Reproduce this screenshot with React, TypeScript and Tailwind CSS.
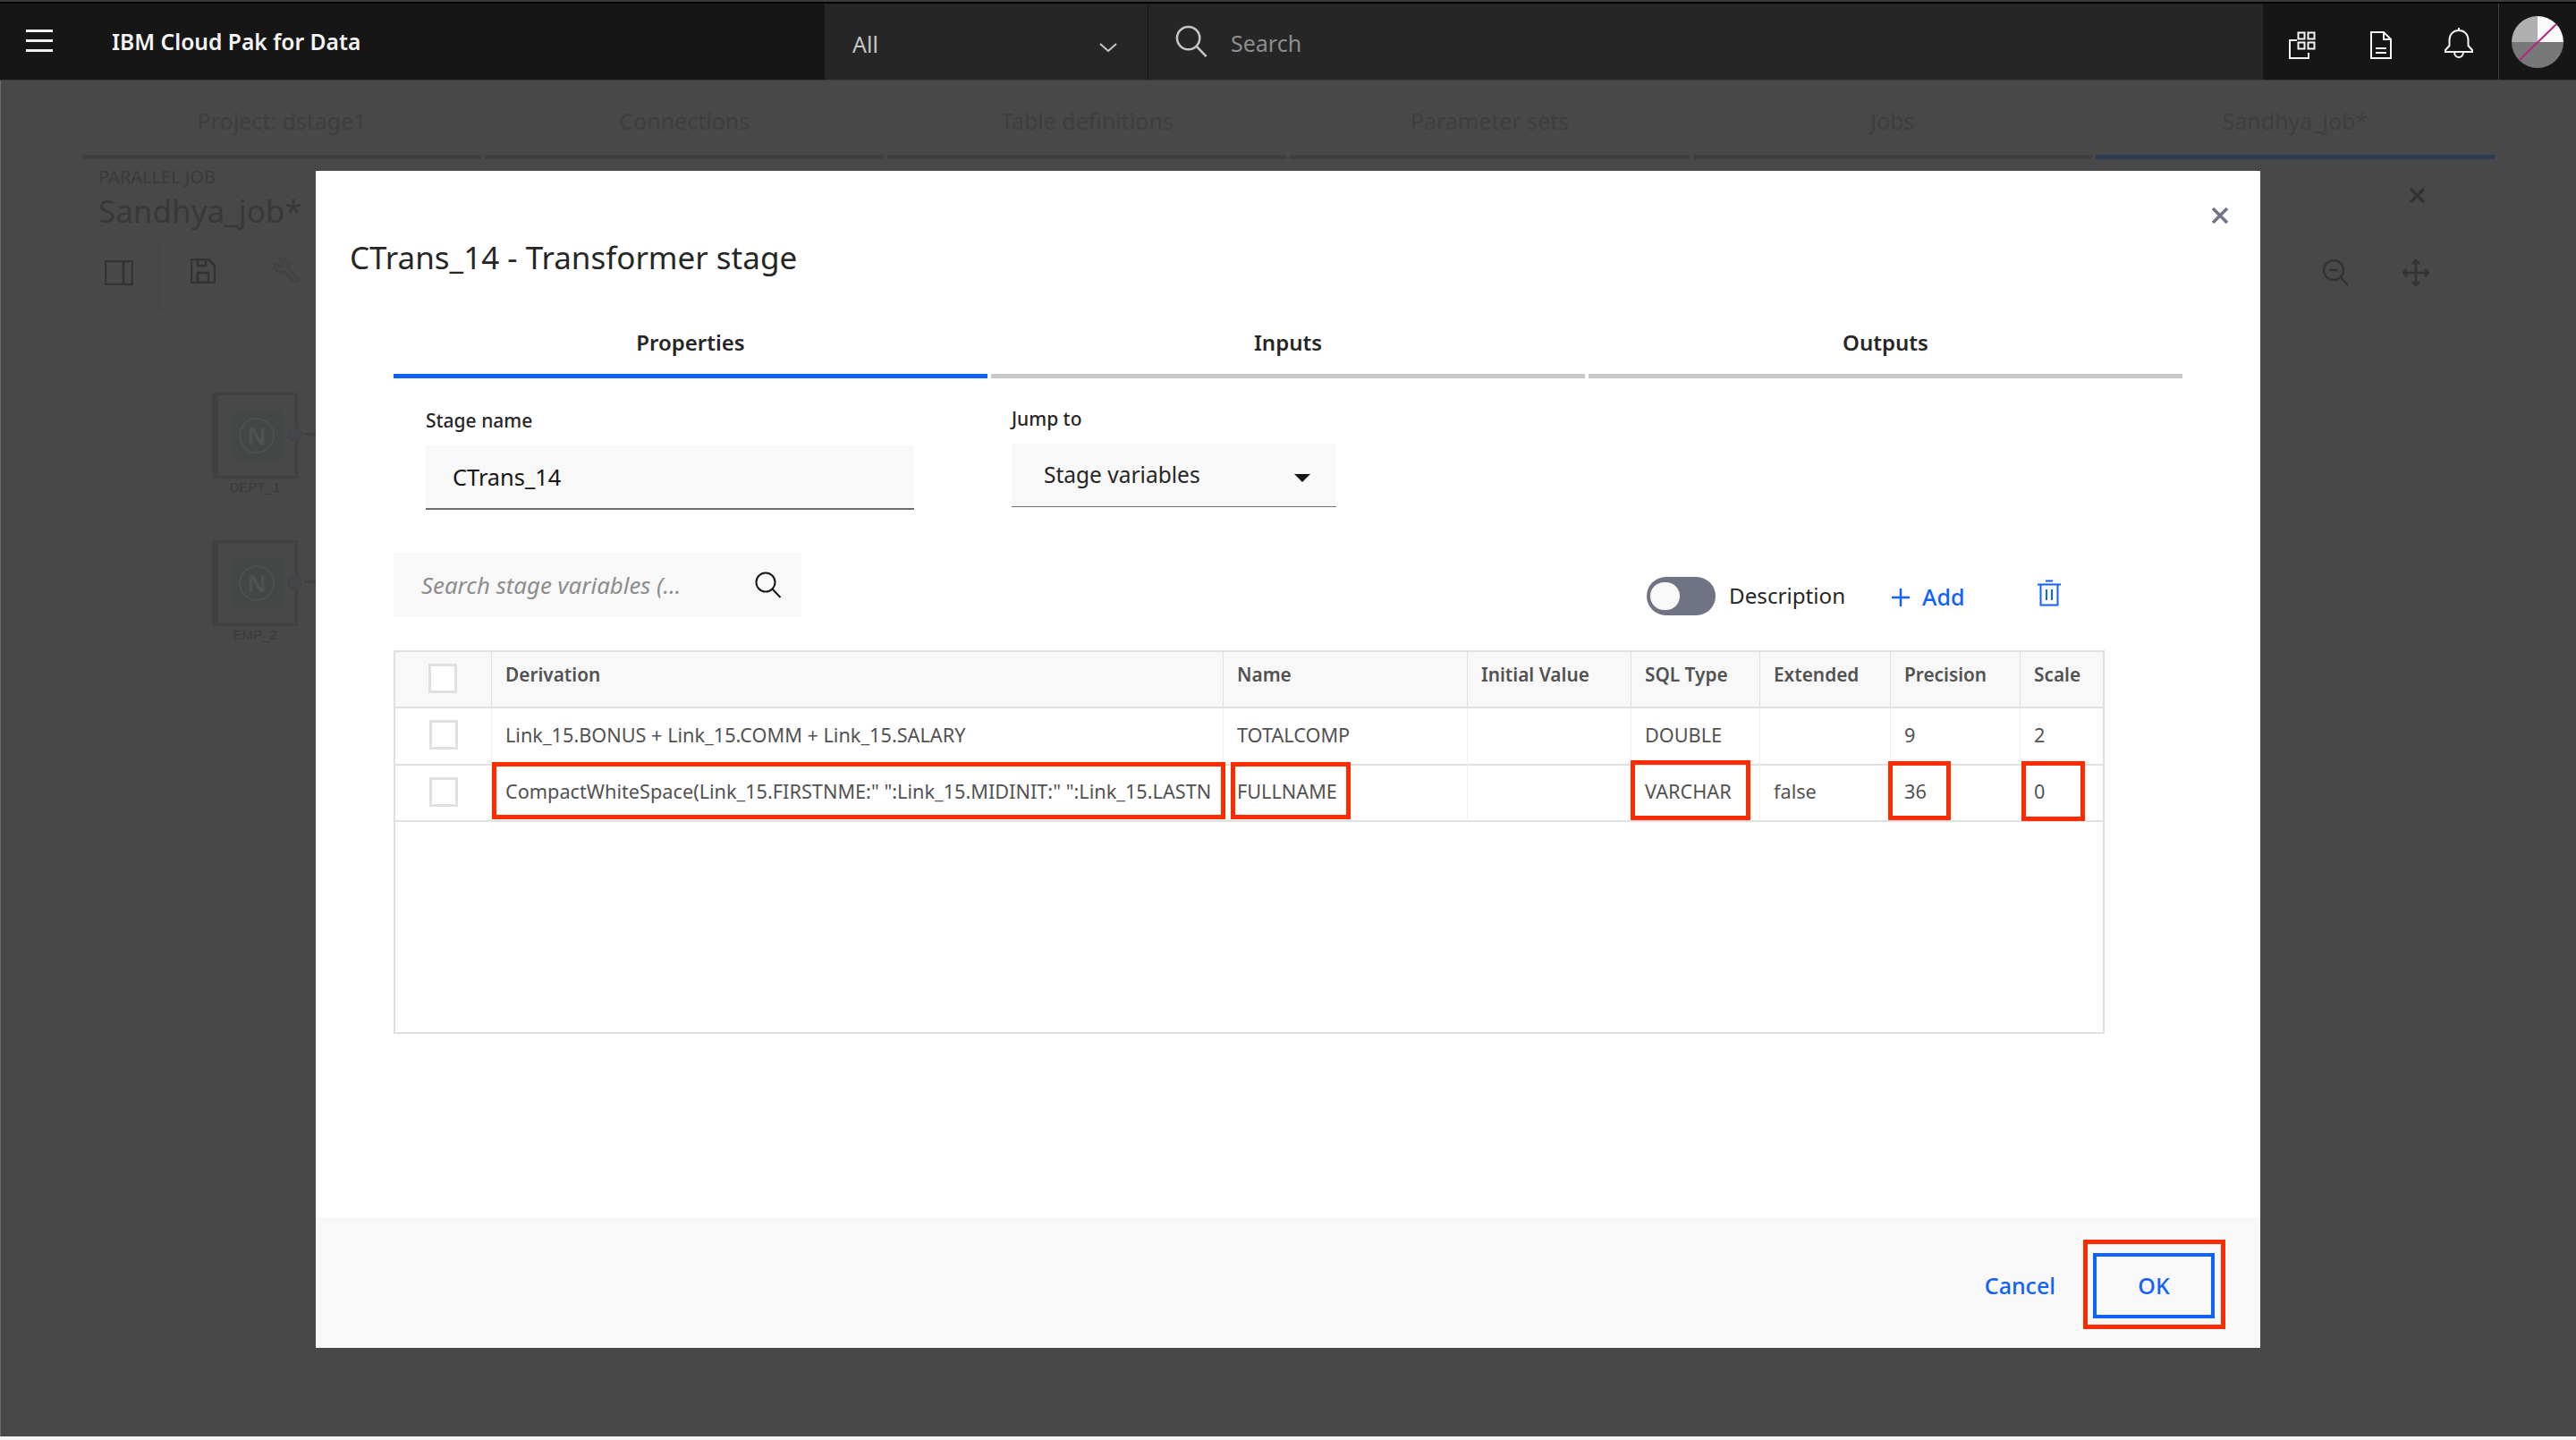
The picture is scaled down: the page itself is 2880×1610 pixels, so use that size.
import { ReactNode } from 'react';
import { Wrench } from 'lucide-react';

const bgTabs = ['Project: dstage1', 'Connections', 'Table definitions', 'Parameter sets', 'Jobs', 'Sandhya_job*'];

function Checkbox({ head }: { head?: boolean }) {
  return <div className={`w-[32px] h-[33px] border-[3px] border-[#e0e0e0] bg-white mx-auto ${head ? 'mt-[2px] -translate-x-px' : ''}`} />;
}

function HeadCell({ children, last }: { children?: ReactNode; last?: boolean }) {
  return (
    <th className={`h-[63px] align-top pt-[11px] px-[15px] text-left bg-[#f8f8f8] text-[20.8px] leading-[28px] font-semibold text-[#525252] border-b-2 border-[#e0e0e0] whitespace-nowrap ${last ? '' : 'border-r'}`}>
      {children}
    </th>
  );
}

function Cell({ children, short, last }: { children?: ReactNode; short?: boolean; last?: boolean }) {
  return (
    <td className={`pl-[15px] pr-[14px] pb-[3px] text-[21.7px] leading-[28px] text-[#525252] whitespace-nowrap border-b-2 border-[#e0e0e0] ${short ? 'h-[63px]' : 'h-[64px]'} ${last ? '' : 'border-r border-r-[#f0f0f0]'}`}>
      {children}
    </td>
  );
}

function CanvasNode({ label, className }: { label: string; className: string }) {
  return (
    <div className={`absolute left-[237px] w-[116px] ${className}`}>
      <div className="relative w-[96px] h-[96px] border-[3px] border-l-[7px] border-[#414141] flex items-center justify-center">
        <div className="w-[57px] h-[57px] bg-[#434745] flex items-center justify-center">
          <div className="w-[40px] h-[40px] rounded-full border-2 border-[#4d504e] flex items-center justify-center text-[26px] leading-none font-bold text-[#4e5250]">N</div>
        </div>
        <div className="absolute -right-[8px] top-[36px] w-[16px] h-[16px] rounded-full bg-[#43464b] border border-[#414141]" />
        <div className="absolute -right-[24px] top-[42px] w-[14px] h-[3px] bg-[#414141]" />
      </div>
      <div className="w-[96px] text-center text-[15px] leading-[18px] mt-[1px] text-[#3a3a3a] font-['Liberation_Sans',sans-serif]">{label}</div>
    </div>
  );
}

export default function App() {
  return (
    <div className="relative w-[2880px] h-[1610px] overflow-hidden bg-[#484848] font-['Noto_Sans',sans-serif]">
      {/* top bar */}
      <div className="h-[2px] bg-[#3a3a3a]" />
      <div className="h-[2px] bg-black" />
      <header className="h-[86px] flex bg-[#161616] border-b border-[#3a3a3a]">
        <div className="w-[922px] flex items-center">
          <div className="ml-[29px] w-[30px] flex flex-col gap-[8px] -mt-[3px]">
            <div className="h-[3px] bg-[#f0f0f0]" />
            <div className="h-[3px] bg-[#f0f0f0]" />
            <div className="h-[3px] bg-[#f0f0f0]" />
          </div>
          <span className="ml-[66px] text-[24.6px] leading-none mt-[2px] font-semibold text-[#f4f4f4]">IBM Cloud Pak for Data</span>
        </div>
        <div className="w-[362px] bg-[#262626] border-r border-[#161616] flex items-center justify-between pl-[31px] pr-[34px]">
          <span className="text-[25px] leading-none text-[#c6c6c6] mt-[6px]">All</span>
          <svg width="20" height="10" viewBox="0 0 20 10" fill="none" className="mt-[12px]"><path d="M1 1l9 8 9-8" stroke="#c6c6c6" strokeWidth="2" /></svg>
        </div>
        <div className="flex-1 bg-[#262626] flex items-center pl-[30px]">
          <svg width="37" height="37" viewBox="0 0 38 38" fill="none"><circle cx="15" cy="15" r="13" stroke="#c6c6c6" strokeWidth="2.6" /><path d="M24.500 24.500L35.500 36" stroke="#c6c6c6" strokeWidth="2.6" /></svg>
          <span className="ml-[25px] text-[25px] leading-none text-[#8d8d8d] mt-[3px]">Search</span>
        </div>
        <div className="w-[350px] flex items-center">
          <div className="flex-1 relative h-full">
            <svg width="31" height="31" viewBox="0 0 31 31" fill="none" stroke="#f4f4f4" strokeWidth="2" className="absolute left-[29px] top-[31px]">
              <path d="M9 10H1v20h21v-6" />
              <rect x="10.500" y="1.500" width="7" height="7" /><rect x="21.500" y="1.500" width="7" height="7" />
              <rect x="10.500" y="12.500" width="7" height="7" /><rect x="21.500" y="12.500" width="7" height="7" />
            </svg>
            <svg width="24" height="31" viewBox="0 0 24 31" fill="none" stroke="#f4f4f4" strokeWidth="2" className="absolute left-[120px] top-[31px]">
              <path d="M1 1h14l8 8v21H1zM15 1v8h8" /><path d="M6 19h12M6 24h12" />
            </svg>
            <svg width="34" height="36" viewBox="0 0 34 36" fill="none" stroke="#f4f4f4" strokeWidth="2" className="absolute left-[202px] top-[26px]">
              <path d="M17 1v3M17 4c-6.500 0-10.500 4.500-10.500 11v6L2 26v2h30v-2l-4.500-5v-6C27.500 8.500 23.500 4 17 4z" />
              <path d="M12 28c0 8 10 8 10 0" />
            </svg>
          </div>
          <div className="w-[87px] h-full border-l border-[#3f3f3f] flex items-center justify-center">
            <svg width="58" height="58" viewBox="0 0 58 58">
              <clipPath id="avatar"><circle cx="29" cy="29" r="29" /></clipPath>
              <g clipPath="url(#avatar)">
                <rect width="29" height="29" fill="#b0b0b0" />
                <rect x="29" width="29" height="29" fill="#fafafa" />
                <rect y="29" width="58" height="29" fill="#787878" />
              </g>
              <path d="M9 49L50 9" stroke="#b5267c" strokeWidth="2" />
            </svg>
          </div>
        </div>
      </header>

      {/* page behind the dialog */}
      <div className="ml-[92px] w-[2697px] grid grid-cols-6 gap-[4px] pt-[27px]">
        {bgTabs.map((t, i) => (
          <div key={t} className={`h-[61px] border-b-[5px] text-center text-[25px] leading-[36px] text-[#3e3e3e] ${i === 5 ? 'border-[#2d3a4f]' : 'border-[#3f3f3f]'}`}>{t}</div>
        ))}
      </div>
      <div className="ml-[92px] w-[2697px] h-[87px] border-b border-[#464646] flex">
        <div className="pl-[18px] pt-[6px]">
          <div className="text-[20px] leading-[28px] text-[#3a3a3a]">PARALLEL JOB</div>
          <div className="text-[35px] leading-[48px] text-[#383838]">Sandhya_job*</div>
        </div>
        <svg width="20" height="20" viewBox="0 0 20 20" stroke="#333333" strokeWidth="3.500" className="ml-auto mr-[76px] mt-[31px]"><path d="M2 2l15 15M17 2L2 17" /></svg>
      </div>
      <div className="ml-[92px] w-[2697px] h-[81px] border-b border-[#444444] flex items-center relative">
        <div className="w-[86px] h-full border-r border-[#444444] flex items-center pl-[25px]">
          <svg width="32" height="28" viewBox="0 0 32 28" fill="none" stroke="#333333" strokeWidth="2.500"><rect x="1" y="1" width="30" height="26" /><path d="M21 1v26" /></svg>
        </div>
        <svg width="28" height="28" viewBox="0 0 28 28" fill="none" stroke="#333333" strokeWidth="2.500" className="ml-[35px] -mt-[4px]"><path d="M1 1h19l7 7v19H1zM8 27V16h12v11M8 1v7h9V1" /></svg>
        <Wrench size={32} color="#424242" strokeWidth={1.7} className="ml-[63px] -mt-[6px] -scale-x-100" />
        <svg width="28" height="30" viewBox="0 0 28 30" fill="none" stroke="#333333" strokeWidth="2.500" className="absolute left-[2505px] top-[25px]"><circle cx="12" cy="12" r="11" /><path d="M7 12h10M20 20l8 9" /></svg>
        <svg width="30" height="30" viewBox="0 0 30 30" fill="none" stroke="#333333" strokeWidth="2.500" className="absolute left-[2594px] top-[25px]"><path d="M15 1v28M1 15h28M11 5l4-4 4 4M11 25l4 4 4-4M5 11l-4 4 4 4M25 11l4 4-4 4" /></svg>
      </div>

      <CanvasNode label="DEPT_1" className="top-[439px]" />
      <CanvasNode label="EMP_2" className="top-[604px]" />

      <div className="absolute left-0 top-[90px] bottom-0 w-px bg-[#6a6a6a]" />
      <div className="absolute left-0 right-0 bottom-0 h-[4px] bg-[#f4f4f4]" />

      {/* dialog */}
      <div className="absolute left-[353px] top-[191px] w-[2174px] h-[1316px] bg-white flex flex-col">
        <div className="flex-1">
          <h2 className="ml-[38px] mt-[75px] text-[35px] leading-[44px] text-[#262626] font-normal">CTrans_14 - Transformer stage</h2>

          <div className="ml-[87px] w-[2000px] mt-[54px] grid grid-cols-3 gap-[4px]">
            <div className="h-[59px] leading-[38px] text-center text-[24px] font-semibold text-[#262626] border-b-[5px] border-[#0f62fe]">Properties</div>
            <div className="h-[59px] leading-[38px] text-center text-[24px] font-semibold text-[#262626] border-b-[5px] border-[#c8c8c8]">Inputs</div>
            <div className="h-[59px] leading-[38px] text-center text-[24px] font-semibold text-[#262626] border-b-[5px] border-[#c8c8c8]">Outputs</div>
          </div>

          <div className="ml-[123px] mt-[33px] flex items-start gap-[109px]">
            <div className="w-[546px]">
              <div className="h-[28px] text-[21px] leading-[28px] font-medium text-[#262626]">Stage name</div>
              <div className="mt-[14px] h-[72px] bg-[#f8f8f8] border-b-2 border-[#6f6f6f] flex items-center pl-[30px] text-[25.4px] text-[#161616]">CTrans_14</div>
            </div>
            <div className="w-[363px] -mt-[2px]">
              <div className="h-[28px] text-[21px] leading-[28px] font-medium text-[#262626]">Jump to</div>
              <div className="mt-[14px] h-[71px] bg-[#f8f8f8] border-b border-[#6f6f6f] flex items-center justify-between pl-[36px] pr-[29px] text-[24.5px] text-[#262626]">
                <span>Stage variables</span>
                <svg width="18" height="9" viewBox="0 0 18 9" className="mt-[6px]"><path d="M0 0h18L9 9z" fill="#161616" /></svg>
              </div>
            </div>
          </div>

          <div className="ml-[87px] mt-[48px] flex items-start">
            <div className="w-[456px] h-[72px] bg-[#f8f8f8] flex items-center justify-between pl-[31px] pr-[22px]">
              <span className="text-[25.8px] italic text-[#8d8d8d]">Search stage variables (...</span>
              <svg width="30" height="30" viewBox="0 0 30 30" fill="none" stroke="#161616" strokeWidth="2"><circle cx="12" cy="12" r="10.500" /><path d="M19.500 19.500L28.500 29" /></svg>
            </div>
            <div className="ml-[945px] mt-[27px] h-[43px] flex items-center">
              <div className="w-[77px] h-[43px] rounded-full bg-[#6f7384] pl-[4px] flex items-center">
                <div className="w-[33px] h-[31px] rounded-full bg-[#f8f8f8]" />
              </div>
              <span className="ml-[15px] w-[130px] text-[24.2px] whitespace-nowrap text-[#262626]">Description</span>
              <svg width="20" height="20" viewBox="0 0 20 20" stroke="#0f62fe" strokeWidth="2.500" className="ml-[52px] mt-[2px]"><path d="M10 0v20M0 10h20" /></svg>
              <span className="ml-[14px] text-[25px] font-medium text-[#0f62fe] mt-[2px]">Add</span>
              <svg width="26" height="30" viewBox="0 0 26 30" fill="none" stroke="#0f62fe" strokeWidth="2" className="ml-[82px] -mt-[8px]">
                <path d="M0 5.500h26M3.500 5.500v23h19v-23M9 1.500h8M10 11v12M16 11v12" />
              </svg>
            </div>
          </div>

          <div className="ml-[87px] mt-[37px] w-[1913px] h-[429px] border-2 border-[#e0e0e0]">
            <table className="w-[1909px] table-fixed border-separate border-spacing-0">
              <colgroup>
                <col className="w-[108px]" /><col className="w-[818px]" /><col className="w-[273px]" /><col className="w-[183px]" />
                <col className="w-[144px]" /><col className="w-[146px]" /><col className="w-[145px]" /><col className="w-[92px]" />
              </colgroup>
              <thead>
                <tr>
                  <HeadCell><Checkbox head /></HeadCell>
                  <HeadCell>Derivation</HeadCell>
                  <HeadCell>Name</HeadCell>
                  <HeadCell>Initial Value</HeadCell>
                  <HeadCell>SQL Type</HeadCell>
                  <HeadCell>Extended</HeadCell>
                  <HeadCell>Precision</HeadCell>
                  <HeadCell last>Scale</HeadCell>
                </tr>
              </thead>
              <tbody>
                <tr>
                  <Cell><Checkbox /></Cell>
                  <Cell>Link_15.BONUS + Link_15.COMM + Link_15.SALARY</Cell>
                  <Cell>TOTALCOMP</Cell>
                  <Cell />
                  <Cell>DOUBLE</Cell>
                  <Cell />
                  <Cell>9</Cell>
                  <Cell last>2</Cell>
                </tr>
                <tr>
                  <Cell short><Checkbox /></Cell>
                  <Cell short><div className="overflow-hidden">CompactWhiteSpace(Link_15.FIRSTNME:" ":Link_15.MIDINIT:" ":Link_15.LASTNME)</div></Cell>
                  <Cell short>FULLNAME</Cell>
                  <Cell short />
                  <Cell short>VARCHAR</Cell>
                  <Cell short>false</Cell>
                  <Cell short>36</Cell>
                  <Cell short last>0</Cell>
                </tr>
              </tbody>
            </table>
          </div>
        </div>

        <div className="h-[146px] bg-[#f8f8f8] flex items-center justify-end pr-[51px] pt-[7px]">
          <button className="text-[25px] font-medium text-[#0f62fe]">Cancel</button>
          <button className="ml-[42px] w-[136px] h-[73px] border-[4px] border-[#0f62fe] text-[25px] font-medium text-[#0f62fe]">OK</button>
        </div>

        <svg width="18" height="18" viewBox="0 0 18 18" stroke="#6f7384" strokeWidth="3.500" className="absolute left-[2120px] top-[41px]"><path d="M1 1l16 16M17 1L1 17" /></svg>

        {/* red annotation boxes */}
        <div className="absolute left-[197px] top-[661px] w-[820px] h-[64px] border-[5px] border-[#ff2b00]" />
        <div className="absolute left-[1023px] top-[661px] w-[134px] h-[64px] border-[5px] border-[#ff2b00]" />
        <div className="absolute left-[1470px] top-[659px] w-[134px] h-[67px] border-[5px] border-[#ff2b00]" />
        <div className="absolute left-[1758px] top-[660px] w-[70px] h-[66px] border-[5px] border-[#ff2b00]" />
        <div className="absolute left-[1907px] top-[660px] w-[71px] h-[67px] border-[5px] border-[#ff2b00]" />
        <div className="absolute left-[1976px] top-[1195px] w-[159px] h-[100px] border-[5px] border-[#ff2b00]" />
      </div>
    </div>
  );
}
